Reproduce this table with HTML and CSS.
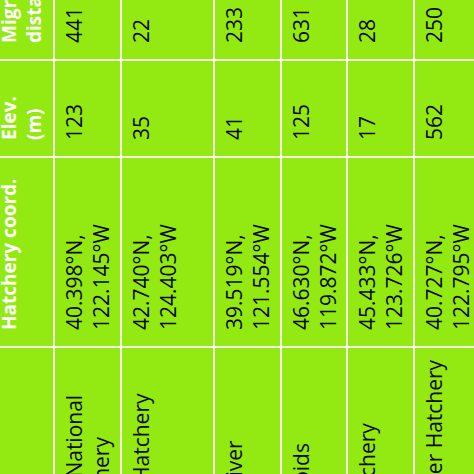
FILE: index.html
```html
<!DOCTYPE html>
<html>
<head>
<meta charset="utf-8">
<link rel="stylesheet" href="styles.css">
</head>
<body>
<div class="viewport">
  <div class="sheet">
    <div class="cell head name">Hatchery</div>
    <div class="cell head">Hatchery coord.</div>
    <div class="cell head">Elev.<br>(m)</div>
    <div class="cell head">Migration<br>distance (km)</div>

    <div class="cell name">Coleman National<br>Fish Hatchery</div>
    <div class="cell">40.398°N,<br>122.145°W</div>
    <div class="cell">123</div>
    <div class="cell">441</div>

    <div class="cell name">Elk River Hatchery</div>
    <div class="cell">42.740°N,<br>124.403°W</div>
    <div class="cell">35</div>
    <div class="cell">22</div>

    <div class="cell name">Feather River<br>Hatchery</div>
    <div class="cell">39.519°N,<br>121.554°W</div>
    <div class="cell">41</div>
    <div class="cell">233</div>

    <div class="cell name">Priest Rapids<br>Hatchery</div>
    <div class="cell">46.630°N,<br>119.872°W</div>
    <div class="cell">125</div>
    <div class="cell">631</div>

    <div class="cell name">Trask Hatchery</div>
    <div class="cell">45.433°N,<br>123.726°W</div>
    <div class="cell">17</div>
    <div class="cell">28</div>

    <div class="cell name">Trinity River Hatchery</div>
    <div class="cell">40.727°N,<br>122.795°W</div>
    <div class="cell">562</div>
    <div class="cell">250</div>
  </div>
</div>
</body>
</html>
```
FILE: styles.css
```css
html, body {
  margin: 0;
  padding: 0;
  background: #93e912;
}

.viewport {
  width: 474px;
  height: 474px;
  overflow: hidden;
  background: #93e912;
}

.sheet {
  display: grid;
  grid-template-columns: 246px 188px 95px 125px;
  grid-template-rows: 62px 65px 91px 65px 64px 65px 65px;
  gap: 2px;
  width: 660px;
  background: #f6f9e4;
  transform-origin: 0 0;
  transform: translate(-9px, 594px) rotate(-90deg);
  font-family: "Open Sans", "Liberation Sans", sans-serif;
}

.cell {
  background: #93e912;
  color: #0a0a0a;
  font-size: 21px;
  line-height: 27px;
  padding: 6px 8px 0 16px;
  white-space: nowrap;
  overflow: hidden;
}

.cell.name {
  padding-left: 24px;
}

.head {
  color: #ffffff;
  font-weight: 700;
  font-size: 19px;
  line-height: 25px;
}
```
